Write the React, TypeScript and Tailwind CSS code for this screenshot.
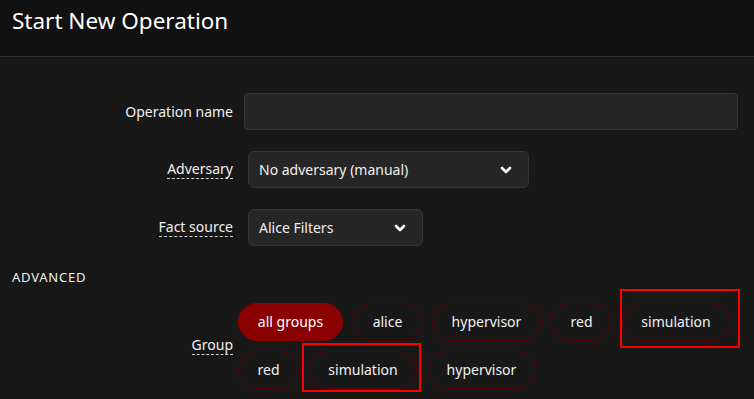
const adversaryChevron = (
  <svg width="12" height="8" viewBox="0 0 12 8" fill="none">
    <path d="M2 2l4 4 4-4" stroke="#fff" strokeWidth="2.6" strokeLinecap="round" strokeLinejoin="round" />
  </svg>
);

function Chip({ label, width, active }: { label: string; width: string; active?: boolean }) {
  return (
    <button
      className={
        (active
          ? "bg-[#8b0000] border-[#8b0000] text-white "
          : "border-[#5a0000] text-[#f2f2f2] ") +
        width +
        " shrink-0 whitespace-nowrap h-[38px] flex items-center justify-center rounded-full border text-[14px]"
      }
    >
      {label}
    </button>
  );
}

export default function App() {
  return (
    <div className="w-[754px] h-[399px] overflow-hidden bg-[#181818] text-[#f0f0f0] font-['Noto_Sans','Open_Sans',sans-serif] relative">
      {/* Header */}
      <div className="h-[57px] bg-[#111111] border-b border-[#333333] flex items-center px-3 pb-[14px]">
        <h1 className="text-[22.5px] text-white">Start New Operation</h1>
      </div>

      {/* Form */}
      <div className="pt-[36px] flex flex-col">
        <div className="flex items-center h-[37px]">
          <label className="w-[233px] text-right text-[14px]">Operation name</label>
          <input className="ml-[11px] w-[494px] h-[37px] bg-[#262626] border border-[#353535] rounded-[4px] outline-none" />
        </div>

        <div className="flex items-center h-[37px] mt-[21px]">
          <div className="w-[233px] flex justify-end">
            <span className="text-[14px] border-b border-dashed border-[#cfcfcf] leading-[18px]">Adversary</span>
          </div>
          <div className="ml-[15px] w-[281px] h-[37px] bg-[#262626] border border-[#353535] rounded-[6px] flex items-center justify-between pl-[10px] pr-[16px] text-[14px]">
            <span>No adversary (manual)</span>
            {adversaryChevron}
          </div>
        </div>

        <div className="flex items-center h-[37px] mt-[21px]">
          <div className="w-[233px] flex justify-end">
            <span className="text-[14px] border-b border-dashed border-[#cfcfcf] leading-[18px]">Fact source</span>
          </div>
          <div className="ml-[15px] w-[175px] h-[37px] bg-[#262626] border border-[#353535] rounded-[6px] flex items-center justify-between pl-[10px] pr-[16px] text-[14px]">
            <span>Alice Filters</span>
            {adversaryChevron}
          </div>
        </div>

        <div className="px-3 mt-[22px] text-[13px] tracking-[0.06em]">ADVANCED</div>

        <div className="flex items-center mt-[15px]">
          <div className="w-[233px] flex justify-end">
            <span className="text-[14px] border-b border-dashed border-[#cfcfcf] leading-[18px]">Group</span>
          </div>
          <div className="ml-[5px] flex flex-col gap-[10px]">
            <div className="flex gap-[10px]">
              <Chip label="all groups" width="w-[105px]" active />
              <Chip label="alice" width="w-[69px]" />
              <Chip label="hypervisor" width="w-[109px]" />
              <Chip label="red" width="w-[61px]" />
              <Chip label="simulation" width="w-[108px]" />
            </div>
            <div className="flex gap-[10px]">
              <Chip label="red" width="w-[61px]" />
              <Chip label="simulation" width="w-[108px]" />
              <Chip label="hypervisor" width="w-[109px]" />
            </div>
          </div>
        </div>
      </div>

      {/* annotation boxes */}
      <div className="absolute left-[620px] top-[289px] w-[120px] h-[59px] border-2 border-[#ff0000] pointer-events-none" />
      <div className="absolute left-[302px] top-[343px] w-[119px] h-[49px] border-2 border-[#ff0000] pointer-events-none" />
    </div>
  );
}
